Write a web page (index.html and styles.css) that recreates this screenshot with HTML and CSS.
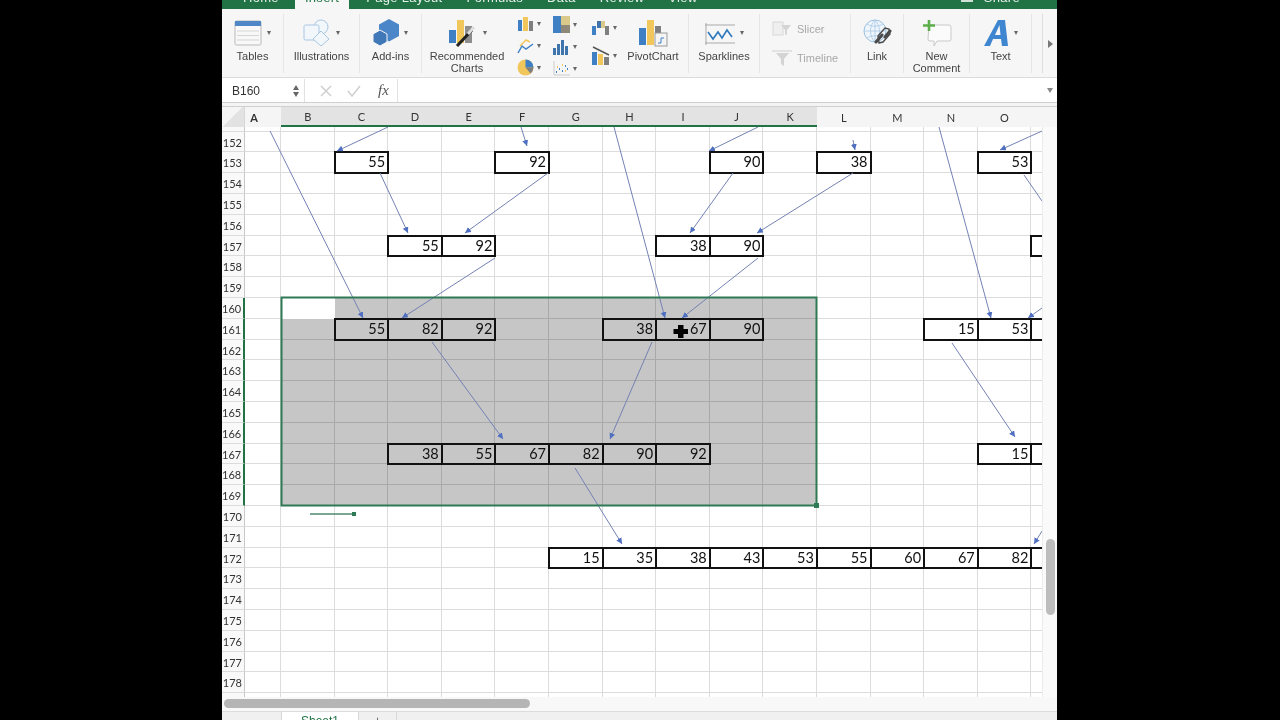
FILE: index.html
```html
<!DOCTYPE html>
<html lang="en">
<head>
  <meta charset="UTF-8">
  <title>Merge Sort - Excel</title>
  <link rel="stylesheet" href="styles.css">
</head>
<body>
  <div class="app">
    <div class="tabs">
      <div class="tab">Home</div>
      <div class="tab current">Insert</div>
      <div class="tab">Page Layout</div>
      <div class="tab">Formulas</div>
      <div class="tab">Data</div>
      <div class="tab">Review</div>
      <div class="tab">View</div>
      <div class="share">
        <svg width="12" height="10" viewBox="0 0 12 10"><rect x="0" y="0" width="12" height="10" fill="#cfe0d6"/></svg>
        Share
      </div>
    </div>

    <div class="ribbon">
      <div class="group g-tables">
        <div class="tool">
          <svg width="28" height="26" viewBox="0 0 28 26">
            <rect x="1" y="1" width="26" height="24" rx="1.5" fill="#f8f8f8" stroke="#b9b9b9"/>
            <rect x="1" y="1" width="26" height="5" fill="#4f86c6"/>
            <path d="M3 11h22M3 15.500h22M3 20h22" stroke="#d5d5d5"/>
          </svg>
          <span class="caret"></span>
        </div>
        <div class="label">Tables</div>
      </div>

      <div class="group g-illus">
        <div class="tool">
          <svg width="28" height="28" viewBox="0 0 28 28" fill="#f2f7fc" stroke="#a9c6e2">
            <circle cx="18" cy="8" r="7"/>
            <rect x="1" y="6" width="15" height="15" rx="1.500"/>
            <path d="M18 12l8 8-8 7-8-7z"/>
          </svg>
          <span class="caret"></span>
        </div>
        <div class="label">Illustrations</div>
      </div>

      <div class="group g-addins">
        <div class="tool">
          <svg width="26" height="28" viewBox="0 0 26 28">
            <path d="M16 0l10 5.500V17l-10 5.500L6 17V5.500z" fill="#4a86c8"/>
            <path d="M7 11l7 4v8l-7 4-7-4v-8z" fill="#4078b8" stroke="#f6f6f6"/>
          </svg>
          <span class="caret"></span>
        </div>
        <div class="label">Add-ins</div>
      </div>

      <div class="group g-charts">
        <div class="rec">
          <div class="tool">
            <svg width="30" height="28" viewBox="0 0 30 28">
              <rect x="1" y="11" width="7" height="13" fill="#3f80c4"/>
              <rect x="9" y="1" width="7" height="23" fill="#f1c75b"/>
              <rect x="17" y="7" width="7" height="17" fill="#8e8e8e"/>
              <path d="M9 27L24 11" stroke="#222" stroke-width="3"/>
              <path d="M20 15L26 8" stroke="#ddd" stroke-width="3"/>
            </svg>
            <span class="caret"></span>
          </div>
          <div class="label">Recommended<br>Charts</div>
        </div>
        <div class="minis">
          <div class="mini-col">
            <div class="mini">
              <svg width="17" height="16" viewBox="0 0 17 16"><rect x="1" y="4" width="4" height="11" fill="#3f80c4"/><rect x="6" y="1" width="5" height="14" fill="#f1c75b"/><rect x="12" y="5" width="4" height="10" fill="#7f7f7f"/></svg>
              <span class="caret"></span>
            </div>
            <div class="mini">
              <svg width="17" height="16" viewBox="0 0 17 16" fill="none"><path d="M1 15l4-7 4 3 7-5" stroke="#3f80c4" stroke-width="1.500"/><path d="M3 8l6-6 4 2" stroke="#f1c75b" stroke-width="1.500"/></svg>
              <span class="caret"></span>
            </div>
            <div class="mini">
              <svg width="17" height="17" viewBox="0 0 17 17"><circle cx="8.500" cy="8.500" r="8" fill="#f1c75b"/><path d="M8.500 8.500V.5a8 8 0 0 1 8 8z" fill="#3f80c4"/><path d="M8.500 8.500h8a8 8 0 0 1-3 6z" fill="#7f7f7f"/></svg>
              <span class="caret"></span>
            </div>
          </div>
          <div class="mini-col">
            <div class="mini">
              <svg width="17" height="17" viewBox="0 0 17 17"><rect x="0" y="0" width="8" height="17" fill="#3f80c4"/><rect x="8" y="0" width="9" height="9" fill="#d9c98a"/><rect x="8" y="9" width="9" height="8" fill="#8e8878"/></svg>
              <span class="caret"></span>
            </div>
            <div class="mini">
              <svg width="17" height="15" viewBox="0 0 17 15" fill="#3f74ad"><rect x="0" y="8" width="3" height="7"/><rect x="4" y="4" width="3" height="11"/><rect x="8" y="0" width="3" height="15"/><rect x="12" y="6" width="3" height="9"/></svg>
              <span class="caret"></span>
            </div>
            <div class="mini">
              <svg width="17" height="15" viewBox="0 0 17 15"><path d="M1 0v14h16" stroke="#ccc" fill="none"/><path d="M3 11h1M6 8h1M9 10h1M12 5h1M14 8h1" stroke="#3f80c4" stroke-width="2"/><path d="M4 6h1M9 4h1M12 10h1" stroke="#f1c75b" stroke-width="2"/></svg>
              <span class="caret"></span>
            </div>
          </div>
          <div class="mini-col tall">
            <div class="mini">
              <svg width="18" height="16" viewBox="0 0 18 16"><rect x="0" y="6" width="4" height="9" fill="#3f80c4"/><rect x="5" y="1" width="4" height="7" fill="#3f74ad"/><rect x="9" y="1" width="4" height="7" fill="#d9c98a"/><rect x="13" y="6" width="4" height="9" fill="#7f7f7f"/></svg>
              <span class="caret"></span>
            </div>
            <div class="mini">
              <svg width="18" height="19" viewBox="0 0 18 19"><rect x="0" y="6" width="5" height="13" fill="#3f80c4"/><rect x="6" y="8" width="5" height="11" fill="#f1c75b"/><rect x="12" y="11" width="5" height="8" fill="#7f7f7f"/><path d="M1 1l16 8" stroke="#555" stroke-width="1.500"/></svg>
              <span class="caret"></span>
            </div>
          </div>
        </div>
        <div class="pivot">
          <div class="tool">
            <svg width="30" height="29" viewBox="0 0 30 29">
              <rect x="1" y="9" width="7" height="17" fill="#3f80c4"/>
              <rect x="9" y="1" width="7" height="25" fill="#f1c75b"/>
              <rect x="17" y="7" width="6" height="19" fill="#7f7f7f"/>
              <rect x="17" y="14" width="12" height="13" fill="#f4f4f4" stroke="#9a9a9a"/>
              <path d="M20 24h3v-5h3" stroke="#3f80c4" fill="none"/>
            </svg>
          </div>
          <div class="label">PivotChart</div>
        </div>
      </div>

      <div class="group g-spark">
        <div class="tool">
          <svg width="30" height="25" viewBox="0 0 30 25" fill="none">
            <path d="M1 2v22M0 4h30M0 22h30" stroke="#a9a9a9"/>
            <path d="M3 11l5 7 5-7 4 6 5-8 5 7" stroke="#2f78bd" stroke-width="1.600"/>
          </svg>
          <span class="caret"></span>
        </div>
        <div class="label">Sparklines</div>
      </div>

      <div class="group g-slicer">
        <div class="off-row">
          <svg width="20" height="15" viewBox="0 0 20 15"><rect x="1" y="1" width="10" height="13" fill="#efefef" stroke="#d8d8d8"/><path d="M9 4h10l-4 5v5l-2-1V9z" fill="#d4d4d4"/></svg>
          <span>Slicer</span>
        </div>
        <div class="off-row">
          <svg width="20" height="18" viewBox="0 0 20 18"><path d="M0 2h20" stroke="#e2e2e2" stroke-width="2"/><path d="M4 4h13l-5 6v7l-3-2v-5z" fill="#d4d4d4"/></svg>
          <span>Timeline</span>
        </div>
      </div>

      <div class="group g-link">
        <div class="tool">
          <svg width="29" height="28" viewBox="0 0 29 28" fill="none">
            <circle cx="12" cy="12" r="11" fill="#eef5fb" stroke="#9cc0e0"/>
            <path d="M1 12h22M12 1v22M4 5c5 3 11 3 16 0M4 19c5-3 11-3 16 0M12 1c-6 6-6 16 0 22M12 1c6 6 6 16 0 22" stroke="#a9c8e4" stroke-width=".8"/>
            <path d="M13 23l6-7M22 18l5-6" stroke="#4a4a4a" stroke-width="3" stroke-linecap="round"/>
            <path d="M16 24l4-1 7-8-1-5-4-1-7 8z" stroke="#4a4a4a" stroke-width="1.400"/>
          </svg>
        </div>
        <div class="label">Link</div>
      </div>

      <div class="group g-comment">
        <div class="tool">
          <svg width="30" height="27" viewBox="0 0 30 27" fill="none">
            <path d="M7 5h20a2 2 0 0 1 2 2v12a2 2 0 0 1-2 2H15l-3 5v-5H8a2 2 0 0 1-2-2z" fill="#fbfbfb" stroke="#c9c9c9"/>
            <path d="M7 0v11M1 5.500h12" stroke="#5cae4a" stroke-width="2.600"/>
          </svg>
        </div>
        <div class="label">New<br>Comment</div>
      </div>

      <div class="group g-text">
        <div class="tool">
          <svg width="25" height="28" viewBox="0 0 25 28">
            <path d="M0 27L14 1h7l3 26h-6l-1-7H9l-3 7zM11 16h5.500L15.500 6z" fill="#3f86d0" fill-rule="evenodd"/>
          </svg>
          <span class="caret"></span>
        </div>
        <div class="label">Text</div>
      </div>

      <div class="more"><span class="arrow-right"></span></div>
    </div>

    <div class="formula">
      <div class="namebox">B160</div>
      <div class="stepper"><span class="up"></span><span class="down"></span></div>
      <div class="fbtns">
        <svg width="12" height="12" viewBox="0 0 12 12"><path d="M1 1l10 10M11 1L1 11" stroke="#cfcfcf" stroke-width="1.500"/></svg>
        <svg width="14" height="12" viewBox="0 0 14 12"><path d="M1 6l4 5 8-10" stroke="#cfcfcf" stroke-width="1.500" fill="none"/></svg>
        <span class="fx">fx</span>
      </div>
      <div class="finput"></div>
      <span class="fdrop"></span>
    </div>

    <div class="colhead">
      <div class="corner"></div><div class="col-a">A</div>
      <div class="on">B</div><div class="on">C</div><div class="on">D</div><div class="on">E</div><div class="on">F</div><div class="on">G</div><div class="on">H</div><div class="on">I</div><div class="on">J</div><div class="on">K</div>
      <div>L</div><div>M</div><div>N</div><div>O</div>
    </div>

    <div class="main">
      <div class="sheet">
        <div class="row first"><div class="num"></div><div></div><div></div><div></div><div></div><div></div><div></div><div></div><div></div><div></div><div></div><div></div><div></div><div></div><div></div><div></div><div></div></div>
        <div class="row"><div class="num">152</div><div></div><div></div><div></div><div></div><div></div><div></div><div></div><div></div><div></div><div></div><div></div><div></div><div></div><div></div><div></div><div></div></div>
        <div class="row"><div class="num">153</div><div></div><div></div><div class="box">55</div><div></div><div></div><div class="box">92</div><div></div><div></div><div></div><div class="box">90</div><div></div><div class="box">38</div><div></div><div></div><div class="box">53</div><div></div></div>
        <div class="row"><div class="num">154</div><div></div><div></div><div></div><div></div><div></div><div></div><div></div><div></div><div></div><div></div><div></div><div></div><div></div><div></div><div></div><div></div></div>
        <div class="row"><div class="num">155</div><div></div><div></div><div></div><div></div><div></div><div></div><div></div><div></div><div></div><div></div><div></div><div></div><div></div><div></div><div></div><div></div></div>
        <div class="row"><div class="num">156</div><div></div><div></div><div></div><div></div><div></div><div></div><div></div><div></div><div></div><div></div><div></div><div></div><div></div><div></div><div></div><div></div></div>
        <div class="row"><div class="num">157</div><div></div><div></div><div></div><div class="box">55</div><div class="box">92</div><div></div><div></div><div></div><div class="box">38</div><div class="box">90</div><div></div><div></div><div></div><div></div><div></div><div class="box"></div></div>
        <div class="row"><div class="num">158</div><div></div><div></div><div></div><div></div><div></div><div></div><div></div><div></div><div></div><div></div><div></div><div></div><div></div><div></div><div></div><div></div></div>
        <div class="row"><div class="num">159</div><div></div><div></div><div></div><div></div><div></div><div></div><div></div><div></div><div></div><div></div><div></div><div></div><div></div><div></div><div></div><div></div></div>
        <div class="row sel"><div class="num">160</div><div></div><div class="active"></div><div></div><div></div><div></div><div></div><div></div><div></div><div></div><div></div><div></div><div></div><div></div><div></div><div></div><div></div></div>
        <div class="row sel"><div class="num">161</div><div></div><div></div><div class="box">55</div><div class="box">82</div><div class="box">92</div><div></div><div></div><div class="box">38</div><div class="box">67</div><div class="box">90</div><div></div><div></div><div></div><div class="box">15</div><div class="box">53</div><div class="box"></div></div>
        <div class="row sel"><div class="num">162</div><div></div><div></div><div></div><div></div><div></div><div></div><div></div><div></div><div></div><div></div><div></div><div></div><div></div><div></div><div></div><div></div></div>
        <div class="row sel"><div class="num">163</div><div></div><div></div><div></div><div></div><div></div><div></div><div></div><div></div><div></div><div></div><div></div><div></div><div></div><div></div><div></div><div></div></div>
        <div class="row sel"><div class="num">164</div><div></div><div></div><div></div><div></div><div></div><div></div><div></div><div></div><div></div><div></div><div></div><div></div><div></div><div></div><div></div><div></div></div>
        <div class="row sel"><div class="num">165</div><div></div><div></div><div></div><div></div><div></div><div></div><div></div><div></div><div></div><div></div><div></div><div></div><div></div><div></div><div></div><div></div></div>
        <div class="row sel"><div class="num">166</div><div></div><div></div><div></div><div></div><div></div><div></div><div></div><div></div><div></div><div></div><div></div><div></div><div></div><div></div><div></div><div></div></div>
        <div class="row sel"><div class="num">167</div><div></div><div></div><div></div><div class="box">38</div><div class="box">55</div><div class="box">67</div><div class="box">82</div><div class="box">90</div><div class="box">92</div><div></div><div></div><div></div><div></div><div></div><div class="box">15</div><div class="box"></div></div>
        <div class="row sel"><div class="num">168</div><div></div><div></div><div></div><div></div><div></div><div></div><div></div><div></div><div></div><div></div><div></div><div></div><div></div><div></div><div></div><div></div></div>
        <div class="row sel"><div class="num">169</div><div></div><div></div><div></div><div></div><div></div><div></div><div></div><div></div><div></div><div></div><div></div><div></div><div></div><div></div><div></div><div></div></div>
        <div class="row"><div class="num">170</div><div></div><div></div><div></div><div></div><div></div><div></div><div></div><div></div><div></div><div></div><div></div><div></div><div></div><div></div><div></div><div></div></div>
        <div class="row"><div class="num">171</div><div></div><div></div><div></div><div></div><div></div><div></div><div></div><div></div><div></div><div></div><div></div><div></div><div></div><div></div><div></div><div></div></div>
        <div class="row"><div class="num">172</div><div></div><div></div><div></div><div></div><div></div><div></div><div class="box">15</div><div class="box">35</div><div class="box">38</div><div class="box">43</div><div class="box">53</div><div class="box">55</div><div class="box">60</div><div class="box">67</div><div class="box">82</div><div class="box"></div></div>
        <div class="row"><div class="num">173</div><div></div><div></div><div></div><div></div><div></div><div></div><div></div><div></div><div></div><div></div><div></div><div></div><div></div><div></div><div></div><div></div></div>
        <div class="row"><div class="num">174</div><div></div><div></div><div></div><div></div><div></div><div></div><div></div><div></div><div></div><div></div><div></div><div></div><div></div><div></div><div></div><div></div></div>
        <div class="row"><div class="num">175</div><div></div><div></div><div></div><div></div><div></div><div></div><div></div><div></div><div></div><div></div><div></div><div></div><div></div><div></div><div></div><div></div></div>
        <div class="row"><div class="num">176</div><div></div><div></div><div></div><div></div><div></div><div></div><div></div><div></div><div></div><div></div><div></div><div></div><div></div><div></div><div></div><div></div></div>
        <div class="row"><div class="num">177</div><div></div><div></div><div></div><div></div><div></div><div></div><div></div><div></div><div></div><div></div><div></div><div></div><div></div><div></div><div></div><div></div></div>
        <div class="row"><div class="num">178</div><div></div><div></div><div></div><div></div><div></div><div></div><div></div><div></div><div></div><div></div><div></div><div></div><div></div><div></div><div></div><div></div></div>
        <div class="row"><div class="num"></div><div></div><div></div><div></div><div></div><div></div><div></div><div></div><div></div><div></div><div></div><div></div><div></div><div></div><div></div><div></div><div></div></div>

        <!-- arrows, selection frame and pointer lie over the cells; coordinates are window pixels -->
        <svg class="overlay" width="820" height="570" viewBox="222 127 820 570">
          <defs>
            <marker id="head" markerWidth="7" markerHeight="7" refX="6" refY="3" orient="auto">
              <path d="M0 0L6 3L0 6z" fill="#4f6fc0"/>
            </marker>
          </defs>
          <g class="arrows">
            <line x1="270" y1="131" x2="363" y2="318" marker-end="url(#head)"/>
            <line x1="388" y1="127" x2="337" y2="151" marker-end="url(#head)"/>
            <line x1="521" y1="127" x2="527" y2="146" marker-end="url(#head)"/>
            <line x1="758" y1="127" x2="709" y2="151" marker-end="url(#head)"/>
            <line x1="853" y1="140" x2="855" y2="150" marker-end="url(#head)"/>
            <line x1="614" y1="127" x2="665" y2="318" marker-end="url(#head)"/>
            <line x1="939" y1="127" x2="991" y2="318" marker-end="url(#head)"/>
            <line x1="1042" y1="131" x2="1000" y2="150" marker-end="url(#head)"/>
            <line x1="380" y1="173" x2="408" y2="233" marker-end="url(#head)"/>
            <line x1="548" y1="173" x2="465" y2="233" marker-end="url(#head)"/>
            <line x1="733" y1="173" x2="690" y2="233" marker-end="url(#head)"/>
            <line x1="853" y1="173" x2="757" y2="233" marker-end="url(#head)"/>
            <line x1="495" y1="258" x2="402" y2="318" marker-end="url(#head)"/>
            <line x1="758" y1="258" x2="682" y2="318" marker-end="url(#head)"/>
            <line x1="1024" y1="175" x2="1042" y2="201"/>
            <line x1="1042" y1="308" x2="1028" y2="318" marker-end="url(#head)"/>
            <line x1="432" y1="342" x2="503" y2="439" marker-end="url(#head)"/>
            <line x1="652" y1="342" x2="610" y2="439" marker-end="url(#head)"/>
            <line x1="952" y1="343" x2="1015" y2="437" marker-end="url(#head)"/>
            <line x1="575" y1="468" x2="622" y2="544" marker-end="url(#head)"/>
            <line x1="1042" y1="531" x2="1034" y2="544" marker-end="url(#head)"/>
          </g>
          <rect class="frame" x="281.500" y="297.500" width="535" height="208"/>
          <rect class="handle" x="814" y="503" width="5" height="5"/>
          <path class="trail" d="M310 514h44"/>
          <rect class="handle" x="352" y="512" width="4" height="4"/>
          <path class="pointer" d="M678 325h5.500v4h4.500v5h-4.500v4h-5.500v-4h-4.500v-5h4.500z"/>
        </svg>
      </div>
      <div class="vscroll"><div class="vthumb"></div></div>
    </div>

    <div class="hscroll"><div class="hthumb"></div></div>

    <div class="sheets">
      <div class="sheet-tab"></div>
      <div class="sheet-tab current"><span>Sheet1</span></div>
      <div class="sheet-tab add"><span>+</span></div>
    </div>
  </div>
</body>
</html>
```

FILE: styles.css
```css
body {
  margin: 0;
  background: #000;
  font-family: 'Liberation Sans', Arial, sans-serif;
  color: #444;
}

/* the reference is a soft video frame */
.app {
  width: 835px;
  height: 720px;
  margin-left: 222px;
  background: #f4f4f4;
  overflow: hidden;
  display: flex;
  flex-direction: column;
  filter: blur(0.4px);
}

/* green tab strip, labels cut off by the top of the window */
.tabs {
  height: 9px;
  background: #217346;
  display: flex;
  align-items: flex-end;
  padding-left: 9px;
  overflow: hidden;
  color: #e6f0ea;
  font-size: 13px;
  letter-spacing: 0.3px;
  flex-shrink: 0;
}

.tab {
  padding: 0 12px 3px;
  line-height: 16px;
  white-space: nowrap;
}

.tab.current {
  background: #f6f6f6;
  color: #217346;
  margin: 0 5px 0 4px;
  padding: 0 10px 3px;
}

.share {
  margin-left: auto;
  margin-right: 37px;
  padding-bottom: 3px;
  line-height: 16px;
  white-space: nowrap;
}

.share svg {
  margin-right: 7px;
}

/* ribbon */
.ribbon {
  height: 69px;
  display: flex;
  padding-top: 5px;
  box-sizing: border-box;
  background: #f6f6f6;
  border-bottom: 1px solid #dcdcdc;
  flex-shrink: 0;
}

.group {
  height: 59px;
  padding-top: 2px;
  box-sizing: border-box;
  border-right: 1px solid #e6e6e6;
  display: flex;
  flex-direction: column;
  align-items: center;
}

.g-tables { width: 62px; }
.g-illus { width: 76px; }
.g-addins { width: 62px; }
.g-charts { width: 267px; flex-direction: row; align-items: flex-start; }
.g-spark { width: 71px; }
.g-slicer { width: 91px; align-items: flex-start; padding-left: 12px; padding-top: 0; }
.g-link { width: 53px; }
.g-comment { width: 66px; }
.g-text { width: 62px; }

.tool {
  height: 34px;
  flex-shrink: 0;
  display: flex;
  align-items: center;
  gap: 5px;
}

.label {
  font-size: 11px;
  line-height: 12.3px;
  text-align: center;
  white-space: nowrap;
}

.caret {
  width: 0;
  height: 0;
  border-left: 2.500px solid transparent;
  border-right: 2.500px solid transparent;
  border-top: 4px solid #666;
}

.rec {
  width: 90px;
  display: flex;
  flex-direction: column;
  align-items: center;
}

.minis {
  width: 113px;
  height: 60px;
  padding-left: 5px;
  box-sizing: border-box;
  display: flex;
  gap: 12px;
}

.mini-col {
  display: flex;
  flex-direction: column;
  justify-content: space-between;
}

.mini-col.tall {
  margin-left: 3px;
  padding: 4px 0 0;
  justify-content: flex-start;
  gap: 10px;
}

.mini {
  display: flex;
  align-items: center;
  gap: 3px;
}

.pivot {
  width: 56px;
  display: flex;
  flex-direction: column;
  align-items: center;
}

.off-row {
  height: 29px;
  flex-shrink: 0;
  display: flex;
  align-items: center;
  gap: 5px;
  font-size: 11px;
  color: #a8a8a8;
}

.more {
  flex: 1;
  display: flex;
  align-items: center;
  justify-content: center;
  height: 59px;
  border-left: 1px solid #dedede;
  margin-left: 10px;
}

.arrow-right {
  width: 0;
  height: 0;
  border-top: 4px solid transparent;
  border-bottom: 4px solid transparent;
  border-left: 5px solid #777;
}

/* formula bar */
.formula {
  height: 25px;
  padding-top: 1px;
  background: #fff;
  display: flex;
  align-items: center;
  border-bottom: 1px solid #cfcfcf;
  box-sizing: border-box;
  flex-shrink: 0;
}

.namebox {
  width: 57px;
  padding-left: 10px;
  font-size: 12px;
  color: #333;
}

.stepper {
  width: 13px;
  display: flex;
  flex-direction: column;
  gap: 2px;
  align-items: center;
}

.stepper span {
  width: 0;
  height: 0;
  border-left: 3.500px solid transparent;
  border-right: 3.500px solid transparent;
}

.stepper .up { border-bottom: 5px solid #666; }
.stepper .down { border-top: 5px solid #666; }

.fbtns {
  width: 94px;
  height: 100%;
  margin-left: 2px;
  padding-left: 15px;
  box-sizing: border-box;
  border-left: 1px solid #e2e2e2;
  border-right: 1px solid #e2e2e2;
  display: flex;
  align-items: center;
  gap: 15px;
}

.fx {
  margin-left: 2px;
  font-family: 'Liberation Serif', serif;
  font-style: italic;
  font-size: 15px;
  color: #555;
}

.finput {
  flex: 1;
}

.fdrop {
  width: 0;
  height: 0;
  margin-right: 4px;
  border-left: 3.500px solid transparent;
  border-right: 3.500px solid transparent;
  border-top: 5px solid #888;
}

/* column headers share the grid tracks of the rows */
.colhead,
.row {
  display: grid;
  grid-template-columns: 23px 36px repeat(15, 53.6px) 53.6px;
}

.colhead {
  height: 21px;
  margin-top: 3px;
  background: #f5f5f5;
  border-top: 1px solid #d0d0d0;
  box-sizing: border-box;
  font-family: 'Lato', sans-serif;
  font-size: 11px;
  color: #333;
  flex-shrink: 0;
}

.colhead div {
  display: flex;
  align-items: center;
  justify-content: center;
}

.colhead .corner {
  background: linear-gradient(135deg, #f5f5f5 50%, #e2e2e2 50%);
  border-right: 1px solid #d8d8d8;
}

.colhead .col-a {
  padding-right: 18px;
  font-weight: bold;
}

.colhead .on {
  background: #e3e3e3;
  border-bottom: 2px solid #217346;
}

/* grid */
.main {
  height: 570px;
  display: flex;
  background: #fff;
  flex-shrink: 0;
}

.sheet {
  width: 820px;
  position: relative;
  overflow: hidden;
  font-family: 'Lato', sans-serif;
}

.row {
  height: 20.8px;
  grid-template-rows: 20.8px;
}

.row.first {
  margin-top: -16.2px;
}

.row div {
  box-sizing: border-box;
  border-right: 1px solid #dcdcdc;
  border-bottom: 1px solid #dcdcdc;
  background: #fff;
}

.row .num {
  background: #f9f9f9;
  font-size: 11px;
  line-height: 22px;
  padding-right: 2px;
  text-align: right;
  color: #333;
  border-right: 1px solid #c9c9c9;
}

.row.sel .num {
  border-right: 2px solid #217346;
}

/* B to K of the selected rows */
.row.sel div:nth-child(n+3):nth-child(-n+12) {
  background: #c6c6c6;
  border-color: #a9a9a9;
}

.row.sel div.active:nth-child(n+3) {
  background: #fff;
  border-color: #fff;
}

/* z-index so the next cells and rows don't paint over the outline */
.row div.box {
  position: relative;
  z-index: 1;
  outline: 2px solid #111;
  outline-offset: -1px;
  text-align: right;
  padding-right: 2px;
  font-size: 14.5px;
  line-height: 20px;
  color: #111;
}

.overlay {
  position: absolute;
  left: 0;
  top: 0;
  z-index: 2;
}

.arrows line {
  stroke: #7482b4;
  stroke-width: 1;
}

.frame {
  fill: none;
  stroke: #2e7a55;
  stroke-width: 2;
}

.handle {
  fill: #2e7a55;
}

.trail {
  fill: none;
  stroke: #4c8a6c;
  stroke-width: 1.500;
}

.pointer {
  fill: #000;
}

/* scrollbars and sheet tabs */
.vscroll {
  flex: 1;
  background: #fafafa;
  border-left: 1px solid #ececec;
  position: relative;
}

.vthumb {
  position: absolute;
  top: 412px;
  left: 3px;
  width: 9px;
  height: 76px;
  border-radius: 5px;
  background: #bdbdbd;
}

.hscroll {
  height: 15px;
  padding: 2px;
  box-sizing: border-box;
  background: #f8f8f8;
  border-bottom: 1px solid #dcdcdc;
  flex-shrink: 0;
}

.hthumb {
  width: 306px;
  height: 9px;
  border-radius: 5px;
  background: #b5b5b5;
}

.sheets {
  flex: 1;
  display: flex;
  background: #f0f0f0;
  font-size: 12px;
  color: #217346;
}

.sheet-tab {
  width: 59px;
  border-right: 1px solid #d8d8d8;
  text-align: center;
  line-height: 14px;
  padding-top: 2px;
}

.sheet-tab.current {
  width: 76px;
  background: #fff;
}

.sheet-tab.add {
  width: 37px;
  color: #555;
}
```
